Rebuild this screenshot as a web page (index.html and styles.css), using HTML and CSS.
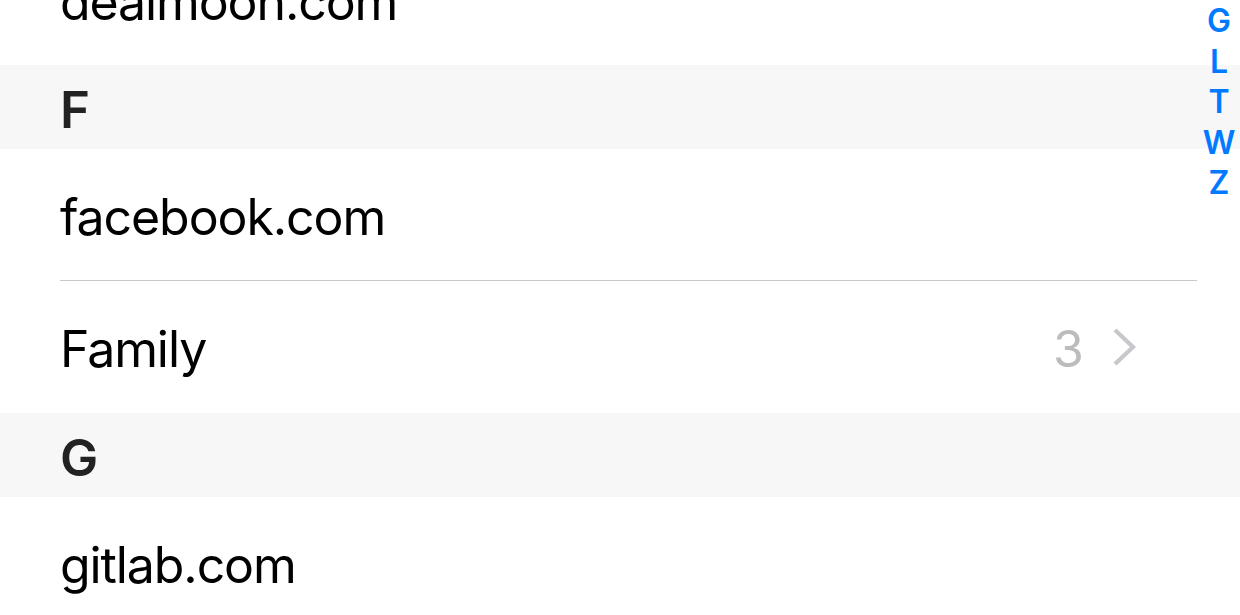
FILE: index.html
```html
<!DOCTYPE html>
<html>
<head>
<meta charset="utf-8">
<link rel="stylesheet" href="styles.css">
</head>
<body>
<div class="screen">
  <div class="list">
    <div class="row"><span class="label">dealmoon.com</span></div>
    <div class="section">F</div>
    <div class="row sep"><span class="label">facebook.com</span></div>
    <div class="row tall"><span class="label">Family</span>
      <span class="detail">3</span>
      <svg class="chev" viewBox="0 0 26 40" width="26" height="40"><path d="M3 3 L21 20 L3 37" fill="none" stroke="#c7c7cc" stroke-width="4.2" stroke-linecap="butt" stroke-linejoin="miter"/></svg>
    </div>
    <div class="section">G</div>
    <div class="row"><span class="label">gitlab.com</span></div>
  </div>
  <div class="index">
    <span>G</span><span>L</span><span>T</span><span>W</span><span>Z</span>
  </div>
</div>
</body>
</html>
```
FILE: styles.css
```css
html, body {
  margin: 0;
  padding: 0;
  background: #ffffff;
  overflow: hidden;
}
.screen {
  position: relative;
  width: 1240px;
  height: 615px;
  overflow: hidden;
  font-family: Inter, "Liberation Sans", sans-serif;
}
.list {
  margin-top: -66px;
  display: flex;
  flex-direction: column;
}
.row {
  height: 131px;
  display: flex;
  align-items: center;
  padding-left: 60px;
  padding-right: 102px;
  box-sizing: border-box;
  position: relative;
}
.row.tall {
  height: 132px;
}
.row.sep {
  border-bottom: 1px solid #c8c7cc;
  margin-left: 60px;
  margin-right: 43px;
  padding-left: 0;
  padding-right: 59px;
  height: 132px;
}
.label {
  flex: 1;
  font-size: 50px;
  color: #000;
  letter-spacing: -1.1px;
  padding-top: 4px;
}
.detail {
  font-size: 50px;
  color: #bcbcbf;
  margin-right: 28px;
  padding-top: 4px;
}
.chev {
  display: block;
}
.section {
  height: 84px;
  background: #f7f7f7;
  display: flex;
  align-items: center;
  padding-left: 60px;
  font-size: 51px;
  font-weight: 600;
  color: #222222;
  padding-top: 4px;
  box-sizing: border-box;
}
.index {
  position: absolute;
  top: 0;
  right: 0;
  width: 42px;
  display: flex;
  flex-direction: column;
  align-items: center;
  padding-top: 1px;
}
.index span {
  display: block;
  height: 40.5px;
  line-height: 40.5px;
  font-size: 32px;
  font-weight: 600;
  color: #007aff;
}
```
